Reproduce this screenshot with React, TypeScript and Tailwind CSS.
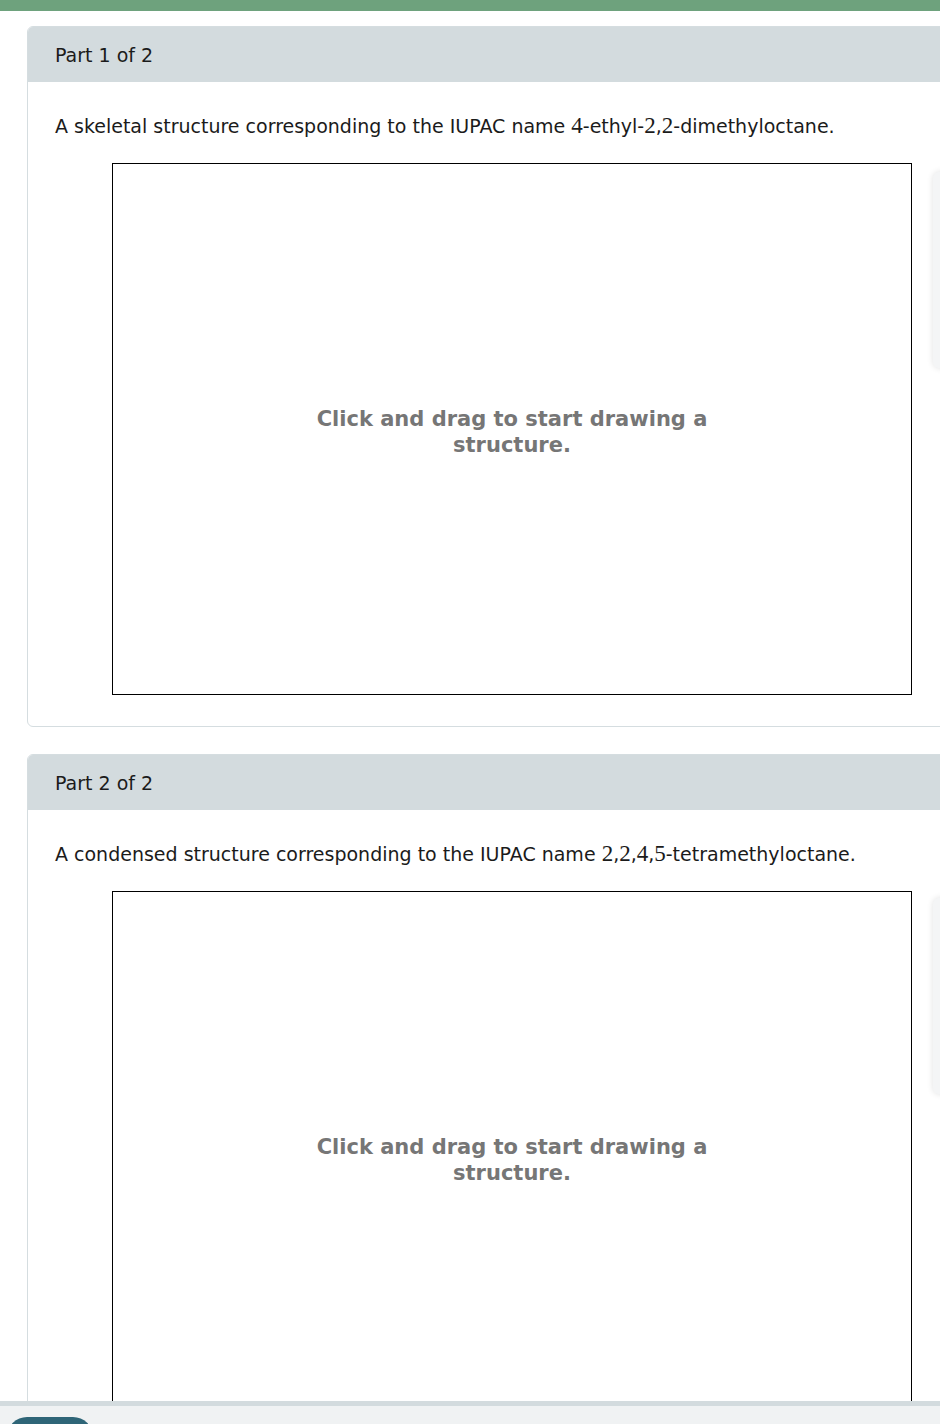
import React from 'react';

const sans = { fontFamily: '"DejaVu Sans", Verdana, sans-serif' };

function Num({ children }: { children: React.ReactNode }) {
  return <span className="[font-family:'Liberation_Serif',serif] text-[23px]">{children}</span>;
}

function DrawingArea({ toolbarTop }: { toolbarTop: string }) {
  return (
    <div className="flex items-start gap-[21px] pl-[84px]">
      <div className="flex h-[532px] w-[800px] shrink-0 items-center justify-center border border-black bg-white">
        <p className="pt-[6px] text-center text-[21px] font-bold leading-[26px] text-[#767676]">
          Click and drag to start drawing a
          <br />
          structure.
        </p>
      </div>
      <div className={`${toolbarTop} h-[196px] w-[60px] shrink-0 rounded-md bg-[#f4f5f6] shadow-[0_0_6px_rgba(0,0,0,0.12)]`} />
    </div>
  );
}

function PartCard({ part, children, toolbarTop }: { part: number; children: React.ReactNode; toolbarTop: string }) {
  return (
    <div className="w-[960px] shrink-0 overflow-hidden rounded-l-md border border-[#d5dde0] bg-white">
      <div className="flex h-[55px] items-center bg-[#d3dbde] px-[27px] pt-[2px] text-[19px] text-[#1b1b1b]">
        Part {part} of 2
      </div>
      <div className="pb-[31px] pt-[32px]">
        <p className="mb-[25px] px-[27px] text-[19px] leading-[24px] text-[#1b1b1b]">{children}</p>
        <DrawingArea toolbarTop={toolbarTop} />
      </div>
    </div>
  );
}

export default function App() {
  return (
    <div style={sans} className="flex h-[1424px] w-[940px] flex-col overflow-hidden bg-white">
      <div className="h-[11px] shrink-0 bg-[#6ea27d]" />
      <div className="flex min-h-0 flex-1 flex-col gap-[27px] overflow-hidden pl-[27px] pt-[15px]">
        <PartCard part={1} toolbarTop="mt-[9px]">
          A skeletal structure corresponding to the IUPAC name <Num>4</Num>-ethyl-<Num>2</Num>,<Num>2</Num>-dimethyloctane.
        </PartCard>
        <PartCard part={2} toolbarTop="mt-[7px]">
          A condensed structure corresponding to the IUPAC name <Num>2</Num>,<Num>2</Num>,<Num>4</Num>,<Num>5</Num>-tetramethyloctane.
        </PartCard>
      </div>
      <div className="h-[23px] shrink-0 overflow-hidden border-t-[5px] border-[#d3dbde] bg-[#f0f2f3] pl-[7px] pt-[11px]">
        <div className="h-[40px] w-[86px] rounded-full bg-[#2e6577]" />
      </div>
    </div>
  );
}
